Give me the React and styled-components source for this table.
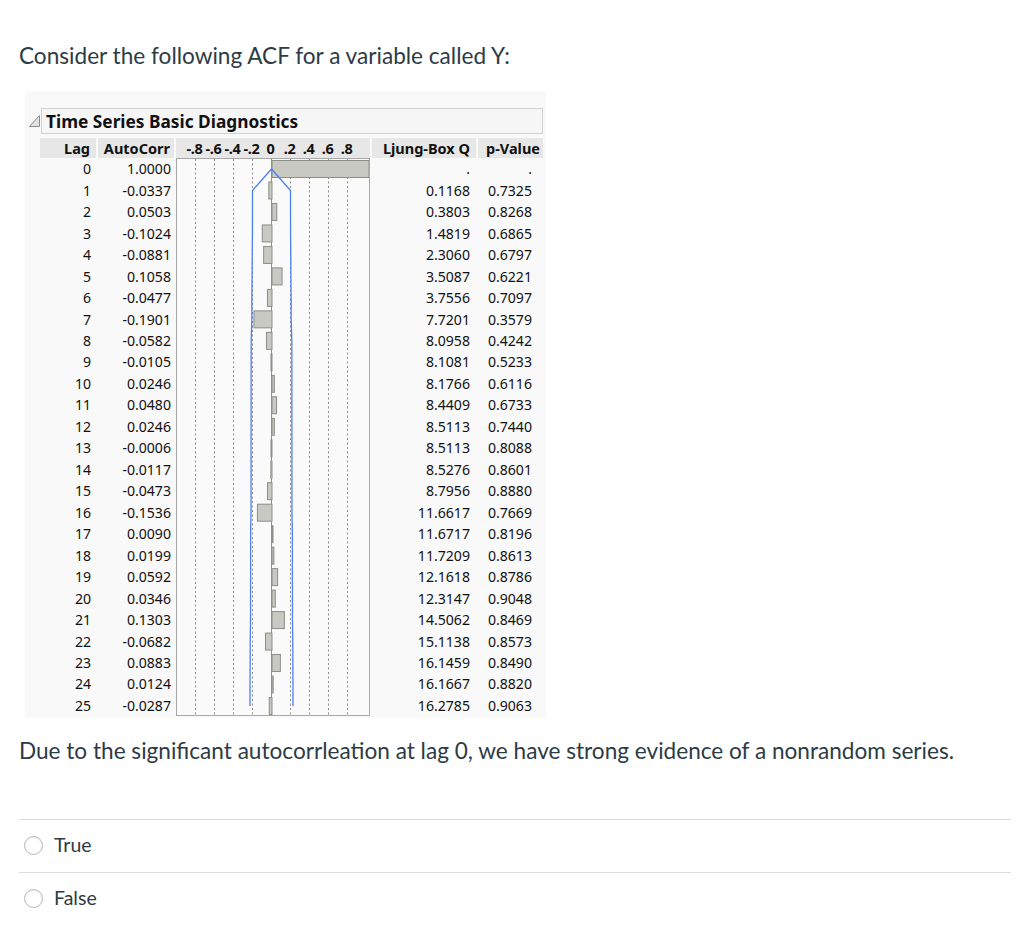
import React from "react";
import styled, { createGlobalStyle } from "styled-components";

const GlobalStyle = createGlobalStyle`
  body {
    margin: 0;
    background: #ffffff;
    font-family: Lato, "Noto Sans", sans-serif;
    color: #2d3b45;
  }
`;

// lag, autocorr, ljung-box Q, p-value
const acf = [
  [0, "1.0000", ".", "."],
  [1, "-0.0337", "0.1168", "0.7325"],
  [2, "0.0503", "0.3803", "0.8268"],
  [3, "-0.1024", "1.4819", "0.6865"],
  [4, "-0.0881", "2.3060", "0.6797"],
  [5, "0.1058", "3.5087", "0.6221"],
  [6, "-0.0477", "3.7556", "0.7097"],
  [7, "-0.1901", "7.7201", "0.3579"],
  [8, "-0.0582", "8.0958", "0.4242"],
  [9, "-0.0105", "8.1081", "0.5233"],
  [10, "0.0246", "8.1766", "0.6116"],
  [11, "0.0480", "8.4409", "0.6733"],
  [12, "0.0246", "8.5113", "0.7440"],
  [13, "-0.0006", "8.5113", "0.8088"],
  [14, "-0.0117", "8.5276", "0.8601"],
  [15, "-0.0473", "8.7956", "0.8880"],
  [16, "-0.1536", "11.6617", "0.7669"],
  [17, "0.0090", "11.6717", "0.8196"],
  [18, "0.0199", "11.7209", "0.8613"],
  [19, "0.0592", "12.1618", "0.8786"],
  [20, "0.0346", "12.3147", "0.9048"],
  [21, "0.1303", "14.5062", "0.8469"],
  [22, "-0.0682", "15.1138", "0.8573"],
  [23, "0.0883", "16.1459", "0.8490"],
  [24, "0.0124", "16.1667", "0.8820"],
  [25, "-0.0287", "16.2785", "0.9063"],
];

const ticks = ["-.8", "-.6", "-.4", "-.2", "0", ".2", ".4", ".6", ".8"];

const ROW_H = 21.48;
const ZERO = 94.5;
const SCALE = 95;
const CHART_W = 192;
const CHART_H = 26 * ROW_H - 2;
const rowCenter = (k) => 10 + k * ROW_H;

const Page = styled.div`
  padding: 41px 13px 20px 19px;
`;

const Prompt = styled.p`
  margin: 0;
  font-size: 22.6px;
  line-height: 30px;
`;

const Panel = styled.div`
  margin: 20px 0 0 6px;
  width: 521px;
  box-sizing: border-box;
  padding: 17px 3px 2px 3px;
  background: #f9f9f9;
  font-family: "Noto Sans", "Open Sans", sans-serif;
  color: #111;
`;

const TitleRow = styled.div`
  display: flex;
  align-items: center;
`;

const Disclosure = styled.svg`
  width: 13px;
  height: 14px;
  flex: none;
`;

const TitleBox = styled.div`
  width: 502px;
  height: 26px;
  box-sizing: border-box;
  border: 1px solid #d2d2d2;
  background: #f6f6f6;
  padding-left: 4px;
  display: flex;
  align-items: center;
  font-weight: 700;
  font-size: 17.3px;
`;

const Table = styled.div`
  margin: 4px 0 0 12px;
  display: grid;
  grid-template-columns: 56px 76px 194px 104px 65px;
  grid-template-rows: 20px repeat(26, ${ROW_H}px);
  column-gap: 2px;
  font-size: 14.1px;
`;

const Head = styled.div`
  background: #e7e7e7;
  font-weight: 700;
  font-size: 14.5px;
  display: flex;
  align-items: center;
  justify-content: flex-end;
  padding-right: ${(p) => p.$pr}px;
  white-space: nowrap;
`;

const TickHead = styled.div`
  background: #e7e7e7;
  font-weight: 700;
  font-size: 14.5px;
  display: flex;
  align-items: center;
  padding-left: 9px;
`;

const Tick = styled.span`
  width: 19px;
  text-align: center;
  flex: none;
  letter-spacing: -0.4px;
`;

const Cell = styled.div`
  display: flex;
  align-items: center;
  justify-content: flex-end;
  padding-right: ${(p) => p.$pr}px;
  white-space: nowrap;
`;

const ChartBox = styled.div`
  grid-column: 3;
  grid-row: 2 / span 26;
  border: 1px solid #a8a8a8;
  background: #fafafa;
  box-sizing: border-box;
  height: ${26 * ROW_H}px;
  overflow: hidden;
`;

const Question = styled.p`
  margin: 18px 0 0;
  font-size: 22.6px;
  line-height: 30px;
`;

const Answers = styled.div`
  margin-top: 53px;
  width: 992px;
`;

const Answer = styled.label`
  display: flex;
  align-items: center;
  gap: 11px;
  height: 53px;
  box-sizing: border-box;
  padding: 0 0 4px 5px;
  border-top: 1px solid #dcdcdc;
  font-size: 19.5px;
  color: #2d3b45;
`;

const Radio = styled.span`
  width: 17px;
  height: 17px;
  border-radius: 50%;
  border: 1px solid #b9b9b9;
  background: #fff;
  box-shadow: inset 0 1px 2px rgba(0, 0, 0, 0.08);
  flex: none;
  margin-top: 3px;
`;

const limits = (() => {
  const out = [0];
  let sum = 0;
  for (let k = 1; k < acf.length; k++) {
    out.push(2 * Math.sqrt((1 + 2 * sum) / 100));
    const r = parseFloat(acf[k][1]);
    sum += r * r;
  }
  return out;
})();

const AcfChart = () => {
  const left = limits
    .map((l, k) => `${ZERO - l * SCALE},${rowCenter(k)}`)
    .join(" ");
  const right = limits
    .map((l, k) => `${ZERO + l * SCALE},${rowCenter(k)}`)
    .join(" ");
  return (
    <svg width={CHART_W} height={CHART_H} style={{ display: "block" }}>
      {[-4, -3, -2, -1, 1, 2, 3, 4].map((i) => (
        <line
          key={i}
          x1={ZERO + i * 19}
          x2={ZERO + i * 19}
          y1={0}
          y2={CHART_H}
          stroke="#8c8c8c"
          strokeWidth="1"
          strokeDasharray="2 2.5"
        />
      ))}
      <line x1={ZERO} x2={ZERO} y1={0} y2={CHART_H} stroke="#8f8f8f" />
      {acf.map(([lag, ac]) => {
        const v = parseFloat(ac);
        const w = Math.max(Math.abs(v) * SCALE, 1);
        const x = v < 0 ? ZERO - w : ZERO;
        return (
          <rect
            key={lag}
            x={x + 0.5}
            y={rowCenter(lag) - 8.5}
            width={lag === 0 ? w + 2 : w}
            height={17}
            fill="#c9c9c3"
            stroke="#8e8e88"
            strokeWidth="1"
          />
        );
      })}
      <polyline points={left} fill="none" stroke="#4d7ff0" strokeWidth="1.3" />
      <polyline points={right} fill="none" stroke="#4d7ff0" strokeWidth="1.3" />
    </svg>
  );
};

const App = () => {
  return (
    <Page>
      <GlobalStyle />
      <Prompt>Consider the following ACF for a variable called Y:</Prompt>

      <Panel>
        <TitleRow>
          <Disclosure viewBox="0 0 13 14">
            <polygon points="1.5,12.5 11.5,12.5 11.5,1.5" fill="#e2e2e2" stroke="#8a8a8a" strokeWidth="1" />
          </Disclosure>
          <TitleBox>Time Series Basic Diagnostics</TitleBox>
        </TitleRow>

        <Table>
          <Head $pr={6}>Lag</Head>
          <Head $pr={4}>AutoCorr</Head>
          <TickHead>
            {ticks.map((t) => (
              <Tick key={t}>{t}</Tick>
            ))}
          </TickHead>
          <Head $pr={6}>Ljung-Box Q</Head>
          <Head $pr={3}>p-Value</Head>

          <ChartBox>
            <AcfChart />
          </ChartBox>

          {acf.map(([lag, ac, q, p]) => (
            <React.Fragment key={lag}>
              <Cell $pr={5} style={{ gridColumn: 1 }}>{lag}</Cell>
              <Cell $pr={3} style={{ gridColumn: 2 }}>{ac}</Cell>
              <Cell $pr={6} style={{ gridColumn: 4 }}>{q}</Cell>
              <Cell $pr={11} style={{ gridColumn: 5 }}>{p}</Cell>
            </React.Fragment>
          ))}
        </Table>
      </Panel>

      <Question>
        Due to the significant autocorrleation at lag 0, we have strong evidence of a nonrandom series.
      </Question>

      <Answers>
        <Answer>
          <Radio />
          True
        </Answer>
        <Answer>
          <Radio />
          False
        </Answer>
      </Answers>
    </Page>
  );
};

export default App;
